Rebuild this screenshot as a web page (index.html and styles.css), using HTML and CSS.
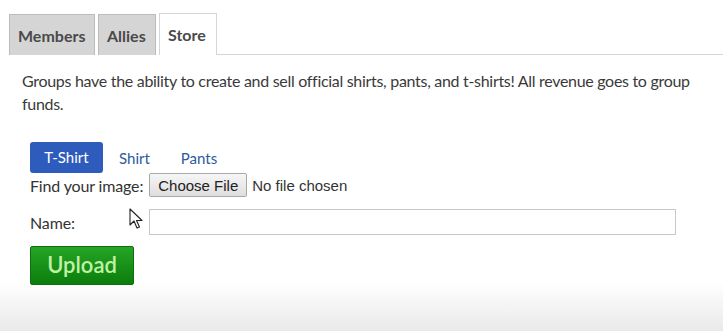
FILE: index.html
```html
<!DOCTYPE html>
<html>
<head>
<meta charset="utf-8">
<link rel="stylesheet" href="styles.css">
</head>
<body>
<div class="page">
  <div class="tabs">
    <div class="tab">Members</div>
    <div class="tab">Allies</div>
    <div class="tab active">Store</div>
    <div class="tab-rest"></div>
  </div>
  <div class="content">
    <p class="intro">Groups have the ability to create and sell official shirts, pants, and t-shirts! All revenue goes to group funds.</p>
    <div class="subtabs">
      <span class="subtab selected">T-Shirt</span>
      <span class="subtab">Shirt</span>
      <span class="subtab">Pants</span>
    </div>
    <div class="row file-row">
      <span class="label">Find your image:</span>
      <span class="file-btn">Choose File</span>
      <span class="file-none">No file chosen</span>
    </div>
    <div class="row name-row">
      <span class="label">Name:</span>
      <span class="name-input"></span>
    </div>
    <div class="upload">Upload</div>
  </div>
  <svg class="cursor" width="14" height="22" viewBox="0 0 14 22"><path d="M1 1 L1 17 L5 13 L8 20 L10.5 19 L7.5 12.5 L13 12.5 Z" fill="#fff" stroke="#222" stroke-width="1.1" stroke-linejoin="round"/></svg>
</div>
</body>
</html>
```
FILE: styles.css
```css
html, body {
  margin: 0;
  padding: 0;
}
body {
  width: 723px;
  height: 331px;
  overflow: hidden;
  background: linear-gradient(to bottom, #ffffff 0px, #ffffff 282px, #e9e9e9 331px);
  font-family: Lato, "Open Sans", sans-serif;
  color: #333;
}
.page {
  position: relative;
  padding-top: 13px;
  padding-left: 9px;
  height: 318px;
}
.tabs {
  display: flex;
  align-items: flex-end;
  height: 42px;
}
.tab {
  box-sizing: border-box;
  height: 41px;
  padding: 0 8px;
  display: flex;
  align-items: center;
  background: #d5d5d5;
  border: 1px solid #bcbcbc;
  border-bottom: none;
  margin-right: 3px;
  font-size: 16px;
  font-weight: bold;
  color: #4a4a4a;
}
.tab:nth-child(1) { width: 86px; }
.tab:nth-child(2) { width: 58px; margin-right: 3px; }
.tab.active {
  background: #fff;
  border-color: #d6d6d6;
  height: 42px;
  width: 58px;
  margin-right: 0;
  border-bottom: none;
}
.tab-rest {
  flex: 1;
  border-bottom: 1px solid #d6d6d6;
  height: 0;
}
.content {
  padding-left: 13px;
}
.intro {
  margin: 14px 0 0 0;
  width: 680px;
  font-size: 16px;
  line-height: 23px;
  color: #3a3a3a;
  letter-spacing: -0.3px;
}
.subtabs {
  margin-top: 27px;
  margin-left: 8px;
  display: flex;
  align-items: center;
  height: 31px;
}
.subtab {
  font-size: 15px;
  color: #2d5a9e;
  padding: 0 16px 0 0;
}
.subtab.selected {
  background: #2e5cbd;
  color: #fff;
  border-radius: 3px;
  height: 31px;
  line-height: 31px;
  padding: 0;
  margin-right: 16px;
  box-sizing: border-box;
  width: 73px;
  text-align: center;
}
.subtab:nth-child(2) { padding-right: 31px; }
.row {
  display: flex;
  align-items: center;
  margin-left: 8px;
}
.label {
  width: 119px;
  font-size: 16px;
  letter-spacing: -0.15px;
  color: #333;
}
.file-row {
  height: 24px;
}
.file-row .label { width: auto; margin-right: 6px; }
.file-btn {
  box-sizing: border-box;
  height: 24px;
  width: 98px;
  border: 1px solid #a8a8a8;
  border-radius: 2px;
  background: linear-gradient(#f6f6f6, #dedede);
  font-family: "Liberation Sans", Arial, sans-serif;
  font-size: 15px;
  color: #222;
  display: flex;
  align-items: center;
  justify-content: center;
}
.file-none {
  margin-left: 5px;
  font-family: "Liberation Sans", Arial, sans-serif;
  font-size: 15px;
  color: #333;
}
.name-row {
  margin-top: 12px;
  height: 26px;
}
.name-input {
  box-sizing: border-box;
  width: 527px;
  height: 26px;
  border: 1px solid #c8c8c8;
  background: #fff;
}
.upload {
  margin-top: 11px;
  margin-left: 8px;
  box-sizing: border-box;
  width: 104px;
  height: 39px;
  padding-bottom: 3px;
  background: linear-gradient(#25a525, #0c7d0c);
  border: 1px solid #0f6e0f;
  border-radius: 2px;
  color: #bff2a6;
  font-size: 22px;
  font-weight: 600;
  display: flex;
  align-items: center;
  justify-content: center;
}
.cursor {
  position: absolute;
  left: 129px;
  top: 208px;
}
```
